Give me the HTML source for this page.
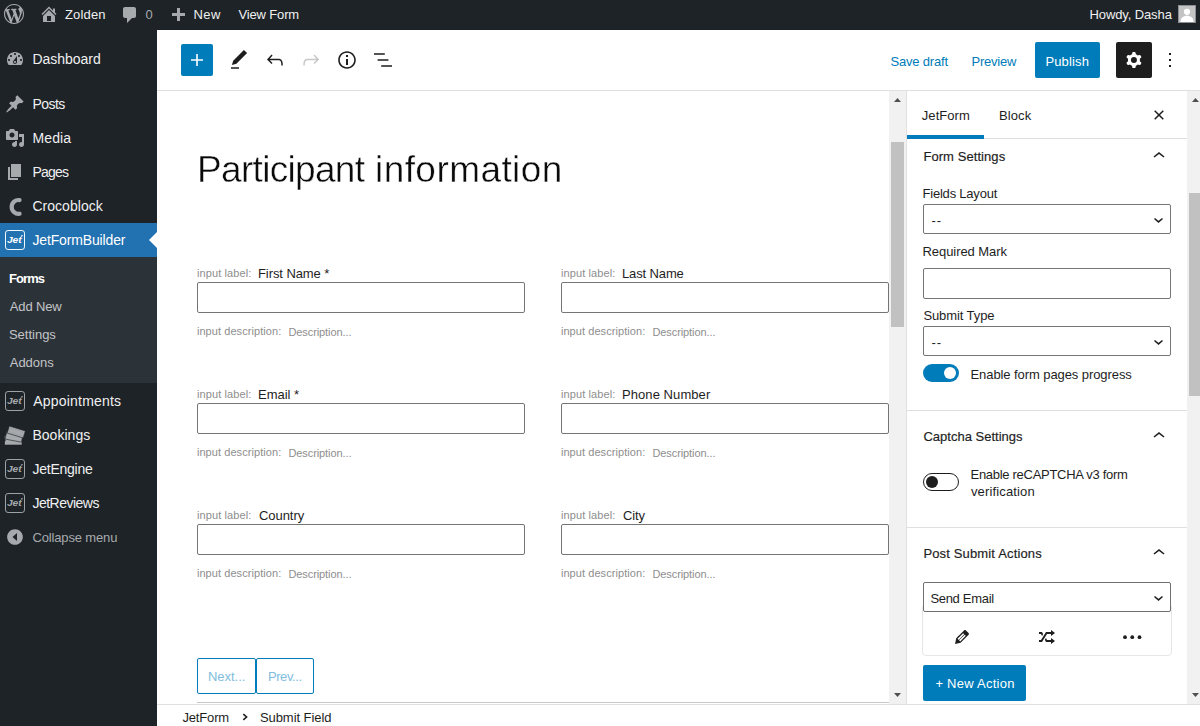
<!DOCTYPE html>
<html lang="en">
<head>
<meta charset="utf-8">
<title>Edit Form</title>
<style>
*{box-sizing:border-box;margin:0;padding:0}
html,body{width:1200px;height:726px;overflow:hidden;background:#fff;font-family:"Liberation Sans",sans-serif;color:#1e1e1e}
.tx{position:absolute;white-space:nowrap}
.a{position:absolute}
svg{position:absolute;overflow:visible}
#adminbar{position:absolute;left:0;top:0;width:1200px;height:30px;background:#1d2327}
#menu{position:absolute;left:0;top:30px;width:157px;height:696px;background:#1d2327}
#header{position:absolute;left:157px;top:30px;width:1043px;height:61px;background:#fff;border-bottom:1px solid #e0e0e0}
#canvas{position:absolute;left:157px;top:91px;width:732px;height:613px;background:#fff;overflow:hidden}
#vscroll1{position:absolute;left:889px;top:91px;width:17px;height:613px;background:#f1f1f1}
#sidebar{position:absolute;left:907px;top:91px;width:280px;height:613px;background:#fff;overflow:hidden}
#sbborder{position:absolute;left:906px;top:91px;width:1px;height:613px;background:#e0e0e0}
#vscroll2{position:absolute;left:1187px;top:91px;width:13px;height:613px;background:#f1f1f1}
#footer{position:absolute;left:157px;top:705px;width:1043px;height:21px;background:#fff}
#footline{position:absolute;left:157px;top:704px;width:1043px;height:1px;background:#e0e0e0}
.inp{position:absolute;width:328px;height:31px;border:1px solid #757575;border-radius:2px;background:#fff}
.sel{position:absolute;left:16px;width:248px;height:30px;border:1px solid #757575;border-radius:2px;background:#fff}
.hr{position:absolute;left:0;width:281px;height:1px;background:#e0e0e0}
.thumb{position:absolute;background:#c1c1c1}
</style>
</head>
<body>
<div id="adminbar">
<!-- WP logo -->
<svg style="left:4px;top:4px" width="20" height="20" viewBox="0 0 20 20"><path fill="#a7aaad" d="M20 10c0-5.51-4.49-10-10-10C4.48 0 0 4.49 0 10c0 5.52 4.48 10 10 10 5.51 0 10-4.48 10-10zM7.78 15.37L4.37 6.22c.55-.02 1.17-.08 1.17-.08.5-.06.44-1.13-.06-1.11 0 0-1.45.11-2.37.11-.18 0-.37 0-.58-.01C4.12 2.69 6.87 1.11 10 1.11c2.33 0 4.45.87 6.05 2.34-.68-.11-1.65.39-1.65 1.58 0 .74.45 1.36.9 2.1.35.61.55 1.36.55 2.46 0 1.49-1.4 5-1.4 5l-3.03-8.37c.54-.02.82-.17.82-.17.5-.05.44-1.25-.06-1.22 0 0-1.44.12-2.38.12-.87 0-2.33-.12-2.33-.12-.5-.03-.56 1.2-.06 1.22l.92.08 1.26 3.41zM17.41 10c.24-.64.74-1.87.43-4.25.7 1.29 1.05 2.71 1.05 4.25 0 3.29-1.73 6.24-4.4 7.78.97-2.59 1.94-5.2 2.92-7.78zM6.1 18.09C3.12 16.65 1.11 13.53 1.11 10c0-1.3.23-2.48.72-3.59C3.25 10.3 4.67 14.2 6.1 18.09zm4.03-6.63l2.58 6.98c-.86.29-1.76.45-2.71.45-.79 0-1.57-.11-2.29-.33.81-2.38 1.62-4.74 2.42-7.1z"/></svg>
<!-- home -->
<svg style="left:39px;top:4px" width="20" height="20" viewBox="0 0 20 20"><path fill="#a7aaad" d="M16 8.5l1.53 1.53-1.06 1.06L10 4.62l-6.47 6.47-1.06-1.06L10 2.5l4 4v-2h2v4zm-6-2.460l6 5.990V18H4v-5.970zM12 17v-5H8v5h4z"/></svg>
<!-- comment -->
<svg style="left:120px;top:5px" width="20" height="20" viewBox="0 0 20 20"><path fill="#a7aaad" d="M5 2h9c1.1 0 2 .9 2 2v7c0 1.1-.9 2-2 2h-2l-5 5v-5H5c-1.1 0-2-.9-2-2V4c0-1.1.9-2 2-2z"/></svg>
<!-- plus -->
<svg style="left:168px;top:6px" width="20" height="20" viewBox="0 0 20 20"><path fill="#a7aaad" d="M17 7v3h-5v5H9v-5H4V7h5V2h3v5h5z"/></svg>
<!-- avatar -->
<div class="a" style="left:1178px;top:5px;width:18px;height:18px;background:#c4c4c4;border:1px solid #8c8f94;overflow:hidden">
<svg style="left:0;top:0" width="16" height="16" viewBox="0 0 16 16"><circle cx="8" cy="5.800" r="3.100" fill="#fff"/><path d="M1.500 16c0-4 2.600-6.200 6.500-6.200s6.500 2.200 6.500 6.200z" fill="#fff"/></svg>
</div>
<span class="tx" style="left:64.9px;top:8.0px;font-size:13px;line-height:13px;color:#f0f0f1;letter-spacing:0.18px;">Zolden</span>
<span class="tx" style="left:145.4px;top:8.0px;font-size:13px;line-height:13px;color:#a7aaad;letter-spacing:0.00px;">0</span>
<span class="tx" style="left:193.5px;top:8.0px;font-size:13px;line-height:13px;color:#f0f0f1;letter-spacing:0.45px;">New</span>
<span class="tx" style="left:238.4px;top:8.0px;font-size:13px;line-height:13px;color:#f0f0f1;letter-spacing:-0.14px;">View Form</span>
<span class="tx" style="left:1089.5px;top:8.0px;font-size:13px;line-height:13px;color:#f0f0f1;letter-spacing:-0.11px;">Howdy, Dasha</span>
</div>

<div id="menu">
<!-- current item bg -->
<div class="a" style="left:0;top:193px;width:157px;height:34px;background:#2271b1"></div>
<div class="a" style="left:0;top:227px;width:157px;height:126px;background:#2c3338"></div>
<!-- notch -->
<svg style="left:149px;top:202px" width="8" height="16" viewBox="0 0 8 16"><path d="M8 0L0 8l8 8z" fill="#fff"/></svg>
<!-- dashboard -->
<svg style="left:5px;top:19px" width="20" height="20" viewBox="0 0 20 20"><path fill="#a7aaad" d="M3.760 16h12.480c1.100-1.370 1.760-3.110 1.760-5 0-4.420-3.580-8-8-8s-8 3.580-8 8c0 1.890.66 3.630 1.760 5zM10 4c.55 0 1 .45 1 1s-.45 1-1 1-1-.45-1-1 .45-1 1-1zM6 6c.55 0 1 .45 1 1s-.45 1-1 1-1-.45-1-1 .45-1 1-1zm8 0c.55 0 1 .45 1 1s-.45 1-1 1-1-.45-1-1 .45-1 1-1zm-5.370 5.550L12 7v6c0 1.100-.9 2-2 2s-2-.9-2-2c0-.57.24-1.080.63-1.450zM4 10c.55 0 1 .45 1 1s-.45 1-1 1-1-.45-1-1 .45-1 1-1zm12 0c.55 0 1 .45 1 1s-.45 1-1 1-1-.45-1-1 .45-1 1-1zm-5 3c0-.55-.45-1-1-1s-1 .45-1 1 .45 1 1 1 1-.45 1-1z"/></svg>
<!-- pin -->
<svg style="left:5px;top:64px" width="20" height="20" viewBox="0 0 20 20"><path fill="#a7aaad" d="M10.440 3.020l1.820-1.820 6.360 6.350-1.830 1.820c-1.050-.68-2.480-.57-3.410.36l-.75.75c-.92.93-1.040 2.350-.35 3.410l-1.830 1.820-2.410-2.410-2.800 2.790c-.42.42-3.380 2.710-3.800 2.290s1.860-3.390 2.280-3.810l2.790-2.790L4.100 9.360l1.830-1.820c1.050.69 2.480.57 3.400-.36l.75-.75c.93-.92 1.050-2.350.36-3.410z"/></svg>
<!-- media -->
<svg style="left:5px;top:98px" width="20" height="20" viewBox="0 0 20 20"><path fill="#a7aaad" d="M13 11V4c0-.55-.45-1-1-1h-1.670L9 1H5L3.670 3H2c-.55 0-1 .45-1 1v7c0 .55.45 1 1 1h10c.55 0 1-.45 1-1zM7 4.500c1.380 0 2.500 1.120 2.500 2.500S8.380 9.500 7 9.500 4.500 8.380 4.500 7 5.620 4.500 7 4.500zM14 6h5v10.500c0 1.380-1.120 2.500-2.500 2.500S14 17.880 14 16.500s1.120-2.500 2.500-2.500c.17 0 .34.020.5.050V9h-3V6zm-4 8.050V13h2v3.500c0 1.380-1.120 2.500-2.500 2.500S7 17.880 7 16.500 8.120 14 9.500 14c.17 0 .34.020.5.050z"/></svg>
<!-- pages -->
<svg style="left:5px;top:132px" width="20" height="20" viewBox="0 0 20 20"><path fill="#a7aaad" d="M6 15V2h10v13H6zm-1 1h8v2H3V5h2v11z"/></svg>
<!-- croco -->
<svg style="left:5px;top:166px" width="20" height="20" viewBox="0 0 20 20"><path fill="none" stroke="#a7aaad" stroke-width="4.200" stroke-linecap="round" d="M14.56 4.07A6.9 6.9 0 1 0 14.56 17.73"/></svg>
<svg style="left:5px;top:200px" width="20" height="20" viewBox="0 0 20 20"><rect x=".500" y=".500" width="19" height="19" rx="2.600" fill="none" stroke="#fff" stroke-width=".950"/><text x="1.900" y="13.300" textLength="14.800" lengthAdjust="spacingAndGlyphs" font-family="Liberation Sans, sans-serif" font-size="9.400" font-weight="700" font-style="italic" fill="#fff">Jet</text><path d="M16 5.200h2.200l-1.500 2z" fill="#fff"/></svg>
<svg style="left:5px;top:361px" width="20" height="20" viewBox="0 0 20 20"><rect x=".500" y=".500" width="19" height="19" rx="2.600" fill="none" stroke="#a7aaad" stroke-width=".950"/><text x="1.900" y="13.300" textLength="14.800" lengthAdjust="spacingAndGlyphs" font-family="Liberation Sans, sans-serif" font-size="9.400" font-weight="700" font-style="italic" fill="#a7aaad">Jet</text><path d="M16 5.200h2.200l-1.500 2z" fill="#a7aaad"/></svg>
<svg style="left:5px;top:429px" width="20" height="20" viewBox="0 0 20 20"><rect x=".500" y=".500" width="19" height="19" rx="2.600" fill="none" stroke="#a7aaad" stroke-width=".950"/><text x="1.900" y="13.300" textLength="14.800" lengthAdjust="spacingAndGlyphs" font-family="Liberation Sans, sans-serif" font-size="9.400" font-weight="700" font-style="italic" fill="#a7aaad">Jet</text><path d="M16 5.200h2.200l-1.500 2z" fill="#a7aaad"/></svg>
<svg style="left:5px;top:463px" width="20" height="20" viewBox="0 0 20 20"><rect x=".500" y=".500" width="19" height="19" rx="2.600" fill="none" stroke="#a7aaad" stroke-width=".950"/><text x="1.900" y="13.300" textLength="14.800" lengthAdjust="spacingAndGlyphs" font-family="Liberation Sans, sans-serif" font-size="9.400" font-weight="700" font-style="italic" fill="#a7aaad">Jet</text><path d="M16 5.200h2.200l-1.500 2z" fill="#a7aaad"/></svg>

<!-- bookings -->
<svg style="left:5px;top:395px" width="20" height="20" viewBox="0 0 20 20"><g fill="#a7aaad" stroke="#1d2327" stroke-width=".600"><rect x="-0.400" y="10.600" width="17.400" height="9.400"/><circle cx="-0.400" cy="15.300" r="1.100" fill="#1d2327" stroke="none"/><circle cx="17" cy="15.300" r="1.100" fill="#1d2327" stroke="none"/><rect x="1.600" y="6.800" width="16.600" height="7.400" transform="rotate(11 1.600 6.800)"/><rect x="4.300" y="1" width="16.800" height="7.400" transform="rotate(17 4.300 1)"/><rect x="6.300" y="2.700" width="12.600" height="4" fill="none" stroke="#8a8d91" stroke-width=".500" stroke-dasharray="1.200 .800" transform="rotate(17 4.300 1)"/></g></svg>
<!-- collapse -->
<svg style="left:5px;top:497px" width="20" height="20" viewBox="0 0 20 20"><path fill="#a7aaad" d="M10 2.160c4.330 0 7.840 3.510 7.840 7.840s-3.510 7.840-7.840 7.840S2.160 14.330 2.160 10 5.670 2.160 10 2.160zm2 11.720V6.120L7.500 10z"/></svg>
<span class="tx" style="left:32.5px;top:22.1px;font-size:14px;line-height:14px;color:#f0f0f1;letter-spacing:-0.04px;">Dashboard</span>
<span class="tx" style="left:32.5px;top:67.1px;font-size:14px;line-height:14px;color:#f0f0f1;letter-spacing:-0.54px;">Posts</span>
<span class="tx" style="left:32.5px;top:101.1px;font-size:14px;line-height:14px;color:#f0f0f1;letter-spacing:0.09px;">Media</span>
<span class="tx" style="left:32.5px;top:135.1px;font-size:14px;line-height:14px;color:#f0f0f1;letter-spacing:-0.77px;">Pages</span>
<span class="tx" style="left:32.4px;top:169.1px;font-size:14px;line-height:14px;color:#f0f0f1;letter-spacing:0.04px;">Crocoblock</span>
<span class="tx" style="left:32.4px;top:203.1px;font-size:14px;line-height:14px;color:#fff;letter-spacing:-0.14px;">JetFormBuilder</span>
<span class="tx" style="left:8.9px;top:241.5px;font-size:13px;line-height:13px;color:#fff;letter-spacing:-0.90px;font-weight:700;">Forms</span>
<span class="tx" style="left:9.8px;top:269.5px;font-size:13px;line-height:13px;color:#c3c4c7;letter-spacing:-0.15px;">Add New</span>
<span class="tx" style="left:8.9px;top:297.5px;font-size:13px;line-height:13px;color:#c3c4c7;letter-spacing:0.00px;">Settings</span>
<span class="tx" style="left:9.8px;top:325.5px;font-size:13px;line-height:13px;color:#c3c4c7;letter-spacing:-0.04px;">Addons</span>
<span class="tx" style="left:33.3px;top:364.1px;font-size:14px;line-height:14px;color:#f0f0f1;letter-spacing:0.20px;">Appointments</span>
<span class="tx" style="left:32.4px;top:398.1px;font-size:14px;line-height:14px;color:#f0f0f1;letter-spacing:0.03px;">Bookings</span>
<span class="tx" style="left:32.4px;top:432.1px;font-size:14px;line-height:14px;color:#f0f0f1;letter-spacing:-0.23px;">JetEngine</span>
<span class="tx" style="left:32.4px;top:466.1px;font-size:14px;line-height:14px;color:#f0f0f1;letter-spacing:-0.50px;">JetReviews</span>
<span class="tx" style="left:32.4px;top:500.5px;font-size:13px;line-height:13px;color:#a7aaad;letter-spacing:-0.14px;">Collapse menu</span>
</div>

<div id="header">
<div class="a" style="left:24px;top:14px;width:32px;height:32px;background:#007cba;border-radius:2px"></div>
<svg style="left:28px;top:18px" width="24" height="24" viewBox="0 0 24 24"><path fill="#fff" d="M18 11.200h-5.200V6h-1.600v5.200H6v1.600h5.200V18h1.600v-5.200H18z"/></svg>
<svg style="left:70px;top:18px" width="24" height="24" viewBox="0 0 24 24"><path fill="#1e1e1e" d="M20.100 5.100L16.900 2 6.200 12.700l-1.300 4.400 4.500-1.300L20.100 5.100zM4 20.800h8v-1.500H4v1.500z"/></svg>
<svg style="left:106px;top:18px" width="24" height="24" viewBox="0 0 24 24"><path fill="#1e1e1e" d="M18.300 11.700c-.6-.6-1.400-.9-2.300-.9H6.700l2.900-3.300-1.100-1-4.500 5L8.500 16l1-1-2.700-2.700H16c.5 0 .9.200 1.300.5 1 1 1 3.400 1 4.500v.3h1.500v-.2c0-1.500 0-4.300-1.500-5.700z"/></svg>
<svg style="left:142px;top:18px" width="24" height="24" viewBox="0 0 24 24"><path fill="#c8c8c8" d="M15.600 6.500l-1.100 1 2.900 3.300H8c-.9 0-1.700.3-2.300.9-1.400 1.500-1.400 4.200-1.400 5.600v.2h1.500v-.3c0-1.100 0-3.500 1-4.500.3-.3.700-.5 1.300-.5h9.200L14.500 15l1.100 1.100 4.600-4.600-4.600-5z"/></svg>
<svg style="left:178px;top:18px" width="24" height="24" viewBox="0 0 24 24"><path fill="#1e1e1e" d="M12 3.200c-4.800 0-8.800 3.900-8.800 8.800 0 4.800 3.900 8.800 8.800 8.800 4.800 0 8.800-3.900 8.800-8.800 0-4.800-4-8.800-8.800-8.800zm0 16c-4 0-7.200-3.300-7.200-7.200C4.800 8 8 4.800 12 4.800s7.200 3.300 7.200 7.200c0 4-3.200 7.200-7.200 7.200zM11 17h2v-6h-2v6zm0-8h2V7h-2v2z"/></svg>
<svg style="left:214px;top:18px" width="24" height="24" viewBox="0 0 24 24"><path fill="#1e1e1e" d="M13.800 5.200H3v1.500h10.800V5.200zm-3.600 12v1.500H21v-1.500H10.200zm7.200-6H6.600v1.500h10.800v-1.500z"/></svg>
<!-- publish -->
<div class="a" style="left:878px;top:12px;width:65px;height:36px;background:#007cba;border-radius:2px"></div>
<!-- settings -->
<div class="a" style="left:959px;top:12px;width:36px;height:36px;background:#1e1e1e;border-radius:2px"></div>
<svg style="left:965px;top:18px" width="24" height="24" viewBox="0 0 24 24"><path fill="#fff" fill-rule="evenodd" clip-rule="evenodd" d="M10.289 4.836A1 1 0 0111.275 4h1.306a1 1 0 01.987.836l.244 1.466c.787.26 1.503.679 2.108 1.218l1.393-.522a1 1 0 011.216.437l.653 1.130a1 1 0 01-.23 1.273l-1.148.944a6.025 6.025 0 010 2.435l1.149.946a1 1 0 01.230 1.272l-.653 1.130a1 1 0 01-1.216.437l-1.394-.522c-.605.540-1.320.958-2.108 1.218l-.244 1.466a1 1 0 01-.987.836h-1.306a1 1 0 01-.986-.836l-.244-1.466a5.995 5.995 0 01-2.108-1.218l-1.394.522a1 1 0 01-1.217-.436l-.653-1.131a1 1 0 01.230-1.272l1.149-.946a6.026 6.026 0 010-2.435l-1.148-.944a1 1 0 01-.230-1.272l.653-1.131a1 1 0 011.217-.437l1.393.522a5.994 5.994 0 012.108-1.218l.244-1.466zM14.929 12a3 3 0 11-6 0 3 3 0 016 0z"/></svg>
<svg style="left:1001px;top:18px" width="24" height="24" viewBox="0 0 24 24"><path fill="#1e1e1e" d="M13 19h-2v-2h2v2zm0-6h-2v-2h2v2zm0-6h-2V5h2v2z"/></svg>
<span class="tx" style="left:733.4px;top:24.5px;font-size:13px;line-height:13px;color:#007cba;letter-spacing:-0.18px;">Save draft</span>
<span class="tx" style="left:814.5px;top:24.5px;font-size:13px;line-height:13px;color:#007cba;letter-spacing:-0.24px;">Preview</span>
<span class="tx" style="left:888.4px;top:24.5px;font-size:13px;line-height:13px;color:#fff;letter-spacing:0.15px;">Publish</span>
</div>

<div id="canvas">
<div class="inp" style="left:40px;top:191px"></div>
<div class="inp" style="left:404px;top:191px"></div>
<div class="inp" style="left:40px;top:312px"></div>
<div class="inp" style="left:404px;top:312px"></div>
<div class="inp" style="left:40px;top:433px"></div>
<div class="inp" style="left:404px;top:433px"></div>

<div class="a" style="left:40px;top:567px;width:59px;height:36px;border:1px solid #007cba;border-radius:2px"></div>
<div class="a" style="left:99px;top:567px;width:58px;height:36px;border:1px solid #007cba;border-radius:2px"></div>
<div class="a" style="left:40px;top:611px;width:700px;height:1px;background:#c8c8c8"></div>
<span class="tx" style="left:40.2px;top:60.3px;font-size:37px;line-height:37px;color:#0a0a0a;letter-spacing:-0.68px;-webkit-text-stroke:0.45px #fff;will-change:transform;">Participant</span>
<span class="tx" style="left:218.1px;top:60.3px;font-size:37px;line-height:37px;color:#0a0a0a;letter-spacing:0.43px;-webkit-text-stroke:0.45px #fff;will-change:transform;">information</span>
<span class="tx" style="left:39.9px;top:177.2px;font-size:11px;line-height:11px;color:#8e8e8e;letter-spacing:0.11px;">input label:</span>
<span class="tx" style="left:101.0px;top:175.5px;font-size:13px;line-height:13px;color:#1e1e1e;letter-spacing:-0.08px;">First Name *</span>
<span class="tx" style="left:39.9px;top:235.2px;font-size:11px;line-height:11px;color:#8e8e8e;letter-spacing:0.07px;">input description:</span>
<span class="tx" style="left:131.4px;top:235.5px;font-size:11px;line-height:11px;color:#8e8e8e;letter-spacing:-0.08px;">Description...</span>
<span class="tx" style="left:403.9px;top:177.2px;font-size:11px;line-height:11px;color:#8e8e8e;letter-spacing:0.11px;">input label:</span>
<span class="tx" style="left:465.0px;top:175.5px;font-size:13px;line-height:13px;color:#1e1e1e;letter-spacing:-0.13px;">Last Name</span>
<span class="tx" style="left:403.9px;top:235.2px;font-size:11px;line-height:11px;color:#8e8e8e;letter-spacing:0.07px;">input description:</span>
<span class="tx" style="left:495.4px;top:235.5px;font-size:11px;line-height:11px;color:#8e8e8e;letter-spacing:-0.08px;">Description...</span>
<span class="tx" style="left:39.9px;top:298.2px;font-size:11px;line-height:11px;color:#8e8e8e;letter-spacing:0.11px;">input label:</span>
<span class="tx" style="left:101.0px;top:296.5px;font-size:13px;line-height:13px;color:#1e1e1e;letter-spacing:-0.03px;">Email *</span>
<span class="tx" style="left:39.9px;top:356.2px;font-size:11px;line-height:11px;color:#8e8e8e;letter-spacing:0.07px;">input description:</span>
<span class="tx" style="left:131.4px;top:356.5px;font-size:11px;line-height:11px;color:#8e8e8e;letter-spacing:-0.08px;">Description...</span>
<span class="tx" style="left:403.9px;top:298.2px;font-size:11px;line-height:11px;color:#8e8e8e;letter-spacing:0.11px;">input label:</span>
<span class="tx" style="left:465.0px;top:296.5px;font-size:13px;line-height:13px;color:#1e1e1e;letter-spacing:0.07px;">Phone Number</span>
<span class="tx" style="left:403.9px;top:356.2px;font-size:11px;line-height:11px;color:#8e8e8e;letter-spacing:0.07px;">input description:</span>
<span class="tx" style="left:495.4px;top:356.5px;font-size:11px;line-height:11px;color:#8e8e8e;letter-spacing:-0.08px;">Description...</span>
<span class="tx" style="left:39.9px;top:419.2px;font-size:11px;line-height:11px;color:#8e8e8e;letter-spacing:0.11px;">input label:</span>
<span class="tx" style="left:101.9px;top:417.5px;font-size:13px;line-height:13px;color:#1e1e1e;letter-spacing:-0.03px;">Country</span>
<span class="tx" style="left:39.9px;top:477.2px;font-size:11px;line-height:11px;color:#8e8e8e;letter-spacing:0.07px;">input description:</span>
<span class="tx" style="left:131.4px;top:477.5px;font-size:11px;line-height:11px;color:#8e8e8e;letter-spacing:-0.08px;">Description...</span>
<span class="tx" style="left:403.9px;top:419.2px;font-size:11px;line-height:11px;color:#8e8e8e;letter-spacing:0.11px;">input label:</span>
<span class="tx" style="left:465.9px;top:417.5px;font-size:13px;line-height:13px;color:#1e1e1e;letter-spacing:-0.06px;">City</span>
<span class="tx" style="left:403.9px;top:477.2px;font-size:11px;line-height:11px;color:#8e8e8e;letter-spacing:0.07px;">input description:</span>
<span class="tx" style="left:495.4px;top:477.5px;font-size:11px;line-height:11px;color:#8e8e8e;letter-spacing:-0.08px;">Description...</span>
<span class="tx" style="left:51.0px;top:579.0px;font-size:13px;line-height:13px;color:#80bddc;letter-spacing:-0.03px;">Next...</span>
<span class="tx" style="left:110.9px;top:579.0px;font-size:13px;line-height:13px;color:#80bddc;letter-spacing:-0.39px;">Prev...</span>
</div>

<div id="vscroll1">
<svg style="left:5px;top:7px" width="7" height="4" viewBox="0 0 7 4"><path d="M0 4L3.500 0 7 4z" fill="#505050"/></svg>
<div class="thumb" style="left:2px;top:51px;width:13px;height:185px"></div>
<svg style="left:5px;top:602px" width="7" height="4" viewBox="0 0 7 4"><path d="M0 0L3.500 4 7 0z" fill="#505050"/></svg>
</div>
<div id="sbborder"></div>

<div id="sidebar">
<!-- tabs -->
<div class="hr" style="top:47px"></div>
<div class="a" style="left:0;top:44px;width:77px;height:4px;background:#007cba"></div>
<svg style="left:240px;top:12px" width="24" height="24" viewBox="0 0 24 24"><path fill="none" stroke="#1e1e1e" stroke-width="1.500" d="M7.700 7.800l8.600 8.500M16.300 7.800l-8.600 8.500"/></svg>
<!-- chevrons up -->
<svg style="left:240px;top:53px" width="24" height="24" viewBox="0 0 24 24"><path fill="#1e1e1e" d="M6.500 12.400L12 8l5.500 4.400-.9 1.200L12 10l-4.500 3.600-1-1.200z"/></svg>
<svg style="left:240px;top:333px" width="24" height="24" viewBox="0 0 24 24"><path fill="#1e1e1e" d="M6.500 12.400L12 8l5.500 4.400-.9 1.200L12 10l-4.500 3.600-1-1.200z"/></svg>
<svg style="left:240px;top:450px" width="24" height="24" viewBox="0 0 24 24"><path fill="#1e1e1e" d="M6.500 12.400L12 8l5.500 4.400-.9 1.200L12 10l-4.500 3.600-1-1.200z"/></svg>
<!-- fields -->
<div class="sel" style="top:113px"></div>
<svg style="left:245.600px;top:123.700px" width="11" height="11" viewBox="0 0 11 11"><path d="M1.500 3.500L5.500 6.900l4-3.400" fill="none" stroke="#1e1e1e" stroke-width="1.500"/></svg>
<div class="sel" style="top:177px;height:31px"></div>
<div class="sel" style="top:235px"></div>
<svg style="left:245.600px;top:245.700px" width="11" height="11" viewBox="0 0 11 11"><path d="M1.500 3.500L5.500 6.900l4-3.400" fill="none" stroke="#1e1e1e" stroke-width="1.500"/></svg>
<!-- toggle on -->
<div class="a" style="left:16px;top:273px;width:36px;height:18px;border-radius:9px;background:#007cba"></div>
<div class="a" style="left:37px;top:276px;width:12px;height:12px;border-radius:6px;background:#fff"></div>
<div class="hr" style="top:319px"></div>
<!-- toggle off -->
<div class="a" style="left:16px;top:382px;width:36px;height:18px;border-radius:9px;background:#fff;border:1px solid #1e1e1e"></div>
<div class="a" style="left:19px;top:385px;width:12px;height:12px;border-radius:6px;background:#1e1e1e"></div>
<div class="hr" style="top:436px"></div>
<!-- action panel -->
<div class="a" style="left:15px;top:515px;width:250px;height:50px;border:1px solid #e6e6e6;border-radius:0 0 4px 4px"></div>
<div class="sel" style="top:491px;border-color:#707070"></div>
<svg style="left:245.600px;top:501.700px" width="11" height="11" viewBox="0 0 11 11"><path d="M1.500 3.500L5.500 6.900l4-3.400" fill="none" stroke="#1e1e1e" stroke-width="1.500"/></svg>
<!-- pencil -->
<svg style="left:45px;top:536px" width="20" height="20" viewBox="0 0 20 20"><path fill="#1e1e1e" d="M13.890 3.390l2.710 2.720c.46.46.42 1.240.030 1.640l-8.010 8.020-5.560 1.160 1.160-5.580s7.600-7.630 7.990-8.030c.39-.39 1.220-.39 1.680.070zm-2.730 2.790l-5.590 5.610 1.110 1.110 5.540-5.650zm-2.970 8.230l5.580-5.600-1.070-1.080-5.590 5.600z"/></svg>
<!-- shuffle -->
<svg style="left:129.750px;top:536.300px" width="20" height="20" viewBox="0 0 20 20"><path fill="#1e1e1e" d="M18 6.010L14 9V7h-4l-5 8H2v-2h2l5-8h5V3zM2 5h3l1.150 2.170-1.120 1.800L4 7H2V5zm16 9.010L14 17v-2H9l-1.150-2.170 1.120-1.800L10 13h4v-2z"/></svg>
<!-- dots -->
<svg style="left:213px;top:536px" width="24" height="20" viewBox="0 0 24 20"><circle cx="5" cy="10.200" r="1.900" fill="#1e1e1e"/><circle cx="12.250" cy="10.200" r="1.900" fill="#1e1e1e"/><circle cx="19.500" cy="10.200" r="1.900" fill="#1e1e1e"/></svg>
<!-- new action -->
<div class="a" style="left:16px;top:574px;width:103px;height:36px;background:#007cba;border-radius:2px"></div>
<span class="tx" style="left:14.8px;top:17.7px;font-size:13px;line-height:13px;color:#1e1e1e;letter-spacing:0.06px;">JetForm</span>
<span class="tx" style="left:91.9px;top:17.7px;font-size:13px;line-height:13px;color:#1e1e1e;letter-spacing:0.13px;">Block</span>
<span class="tx" style="left:16.4px;top:58.6px;font-size:13px;line-height:13px;color:#1e1e1e;letter-spacing:0.07px;-webkit-text-stroke:0.18px #1e1e1e;">Form Settings</span>
<span class="tx" style="left:15.5px;top:95.5px;font-size:13px;line-height:13px;color:#1e1e1e;letter-spacing:-0.21px;">Fields Layout</span>
<span class="tx" style="left:24.4px;top:122.5px;font-size:13px;line-height:13px;color:#1e1e1e;letter-spacing:1.08px;">--</span>
<span class="tx" style="left:15.5px;top:154.3px;font-size:13px;line-height:13px;color:#1e1e1e;letter-spacing:-0.06px;">Required Mark</span>
<span class="tx" style="left:16.4px;top:217.5px;font-size:13px;line-height:13px;color:#1e1e1e;letter-spacing:-0.09px;">Submit Type</span>
<span class="tx" style="left:24.4px;top:244.5px;font-size:13px;line-height:13px;color:#1e1e1e;letter-spacing:1.08px;">--</span>
<span class="tx" style="left:63.5px;top:277.0px;font-size:13px;line-height:13px;color:#1e1e1e;letter-spacing:-0.08px;">Enable form pages progress</span>
<span class="tx" style="left:16.4px;top:339.1px;font-size:13px;line-height:13px;color:#1e1e1e;letter-spacing:0.01px;-webkit-text-stroke:0.18px #1e1e1e;">Captcha Settings</span>
<span class="tx" style="left:63.5px;top:376.5px;font-size:13px;line-height:13px;color:#1e1e1e;letter-spacing:-0.29px;">Enable reCAPTCHA v3 form</span>
<span class="tx" style="left:63.9px;top:393.6px;font-size:13px;line-height:13px;color:#1e1e1e;letter-spacing:0.15px;">verification</span>
<span class="tx" style="left:16.4px;top:455.5px;font-size:13px;line-height:13px;color:#1e1e1e;letter-spacing:0.15px;-webkit-text-stroke:0.18px #1e1e1e;">Post Submit Actions</span>
<span class="tx" style="left:23.4px;top:500.7px;font-size:13px;line-height:13px;color:#1e1e1e;letter-spacing:-0.30px;">Send Email</span>
<span class="tx" style="left:28.4px;top:586.0px;font-size:13px;line-height:13px;color:#fff;letter-spacing:0.26px;">+ New Action</span>
</div>

<div id="vscroll2">
<svg style="left:5px;top:7px" width="7" height="4" viewBox="0 0 7 4"><path d="M0 4L3.500 0 7 4z" fill="#505050"/></svg>
<div class="thumb" style="left:2px;top:102px;width:11px;height:203px"></div>
<svg style="left:5px;top:602px" width="7" height="4" viewBox="0 0 7 4"><path d="M0 0L3.500 4 7 0z" fill="#505050"/></svg>
</div>

<div id="footline"></div>
<div id="footer">
<svg style="left:0;top:0" width="120" height="21" viewBox="0 0 120 21"><path fill="none" stroke="#1e1e1e" stroke-width="1.600" d="M86.300 9.100l3.300 2.900-3.300 2.900"/></svg>
<span class="tx" style="left:25.4px;top:6.0px;font-size:13px;line-height:13px;color:#1e1e1e;letter-spacing:-0.15px;">JetForm</span>
<span class="tx" style="left:102.9px;top:6.0px;font-size:13px;line-height:13px;color:#1e1e1e;letter-spacing:-0.05px;">Submit Field</span>
</div>
</body>
</html>
